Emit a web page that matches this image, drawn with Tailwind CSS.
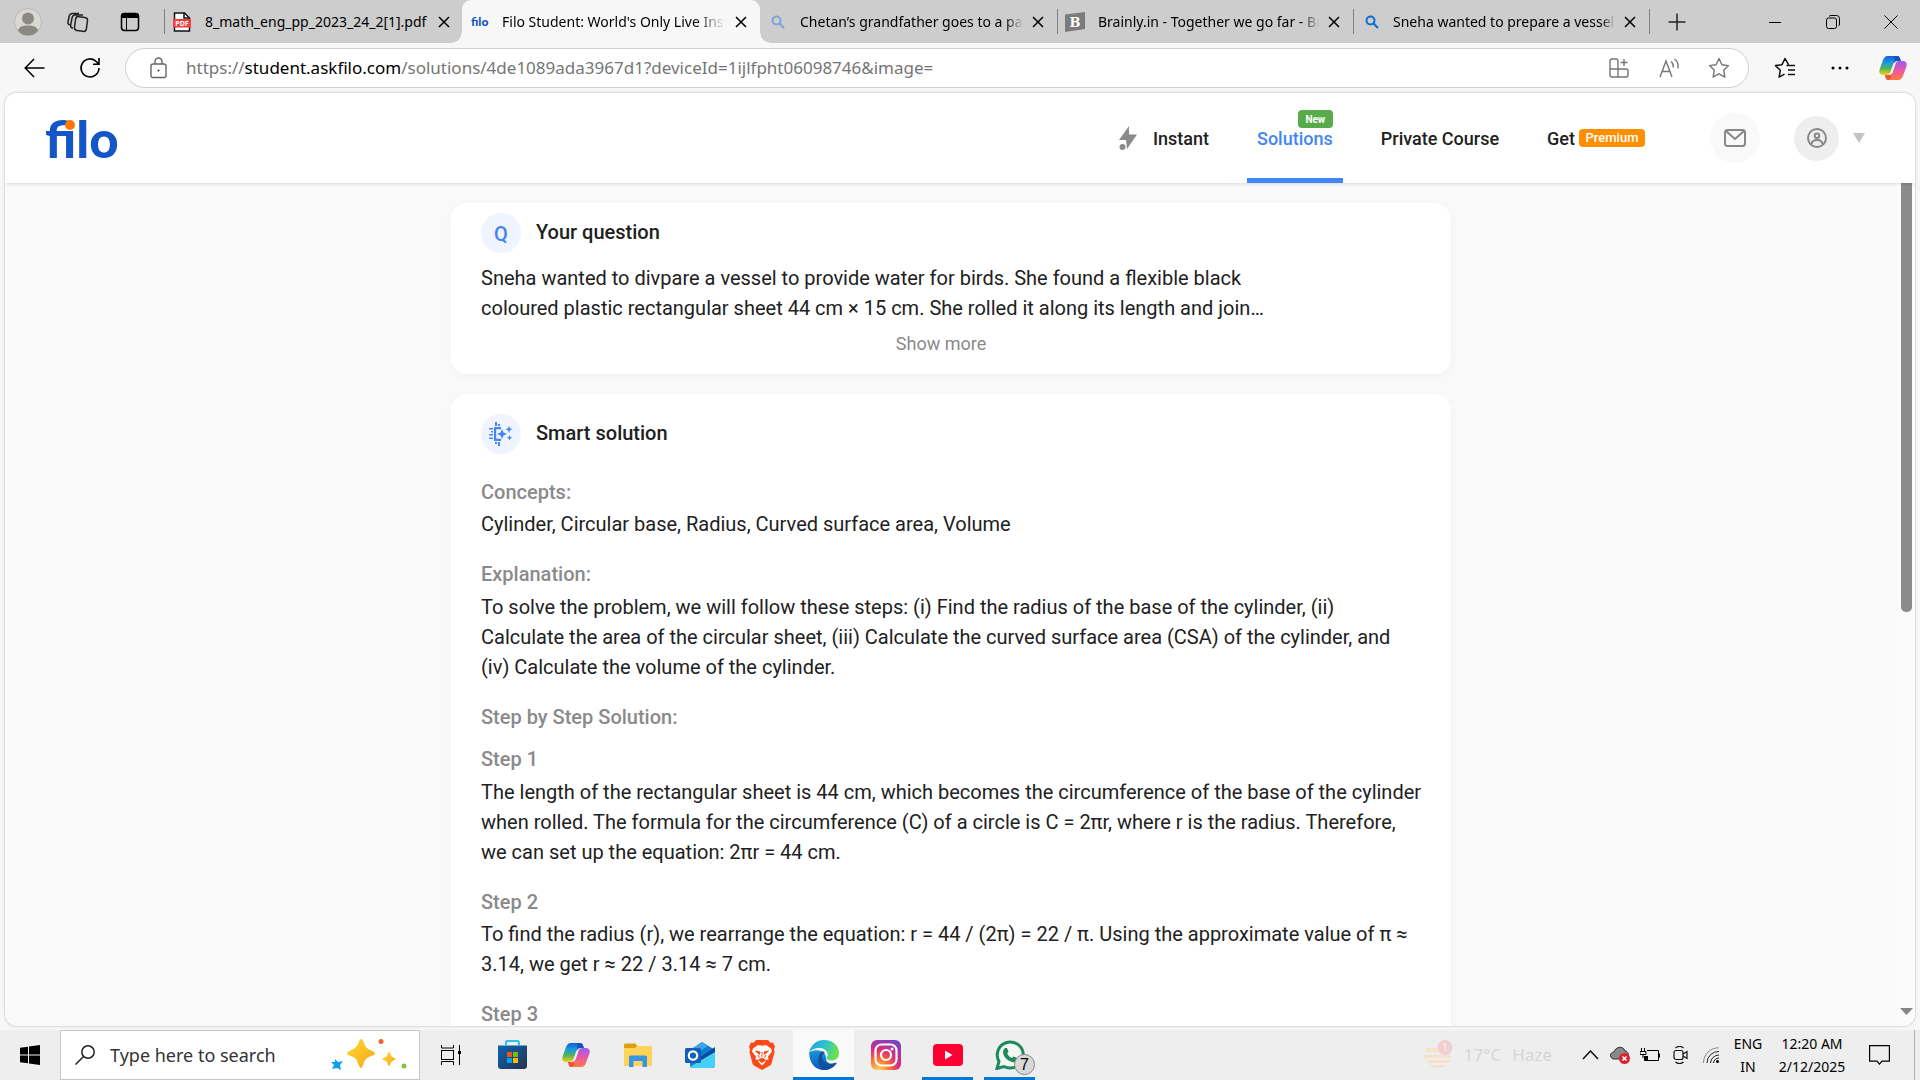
<!DOCTYPE html>
<html lang="en">
<head>
<meta charset="utf-8">
<meta name="viewport" content="width=device-width, initial-scale=1">
<title>Filo Student: World's Only Live Instant Tutoring Platform</title>
<script src="https://cdn.jsdelivr.net/npm/@tailwindcss/browser@4"></script>
</head>
<body class="flex h-screen flex-col overflow-hidden bg-[#f7f7f7] font-['Noto_Sans',sans-serif] text-black">

<svg class="absolute h-0 w-0" aria-hidden="true">
  <defs>
    <linearGradient id="cpA" x1="0" y1="0" x2="0" y2="1"><stop offset="0" stop-color="#0a63d8"/><stop offset=".35" stop-color="#1b9be0"/><stop offset=".65" stop-color="#4fb55a"/><stop offset="1" stop-color="#f7cf1b"/></linearGradient>
    <linearGradient id="cpB" x1="0" y1="0" x2="0" y2="1"><stop offset="0" stop-color="#a05af0"/><stop offset=".5" stop-color="#e858a8"/><stop offset="1" stop-color="#ff7b3d"/></linearGradient>
    <linearGradient id="edA" x1="0" y1="0" x2="1" y2=".3"><stop offset="0" stop-color="#1b9de2"/><stop offset=".55" stop-color="#2cc3d0"/><stop offset="1" stop-color="#6be04e"/></linearGradient>
    <linearGradient id="edB" x1="0" y1="0" x2="0" y2="1"><stop offset="0" stop-color="#1a94dc"/><stop offset="1" stop-color="#0b5bb5"/></linearGradient>
    <linearGradient id="star" x1="0" y1="0" x2="1" y2="1"><stop offset="0" stop-color="#ffd92e"/><stop offset="1" stop-color="#f6a81c"/></linearGradient>
    <linearGradient id="store" x1="0" y1="0" x2="1" y2="1"><stop offset="0" stop-color="#0b66b4"/><stop offset="1" stop-color="#26324f"/></linearGradient>
    <radialGradient id="insta" cx=".25" cy="1" r="1.15"><stop offset="0" stop-color="#ffd667"/><stop offset=".3" stop-color="#fb7a2e"/><stop offset=".6" stop-color="#d82d7e"/><stop offset="1" stop-color="#6a45d0"/></radialGradient>
    <symbol id="copilot" viewBox="0 0 28 28">
      <path d="M18 2H9C6 2 4.500 4 3.500 7.500L.6 15.500c-1 3.500.4 5.500 3.400 5.500h3.500c2.500 0 3.500-1.500 4.300-4L15 8c.8-2.500 2-3.500 4-3.500h2C20.500 3 19.500 2 18 2z" fill="url(#cpA)"/>
      <path d="M15.500 2H18c2.500 0 3.300 2 4 5h-3.500c-2 0-3 1-3.700 3z" fill="#1554b8"/>
      <path d="M10 26h9c3 0 4.500-2 5.500-5.500l2.900-8c1-3.500-.4-5.500-3.400-5.500h-3.500c-2.500 0-3.500 1.500-4.300 4L13 20c-.8 2.500-2 3.500-4 3.500H7C7.500 25 8.500 26 10 26z" fill="url(#cpB)"/>
      <path d="M6 21h4c2 0 2.800-1 3.400-2.500L12 23c-.6 2-1.300 3-2.800 3C7 26 6.500 24 6 21z" fill="#e8533a"/>
    </symbol>
    <symbol id="close" viewBox="0 0 12 12"><path d="M1 1l10 10M11 1L1 11" fill="none" stroke="currentColor" stroke-width="1.500"/></symbol>
    <symbol id="lens" viewBox="0 0 14 14"><circle cx="5.500" cy="5.500" r="4" fill="none" stroke="currentColor" stroke-width="2"/><path d="M8.500 8.500l4.500 4.500" stroke="currentColor" stroke-width="2.200"/></symbol>
  </defs>
</svg>

<!-- Tab strip -->
<header class="flex h-[43px] shrink-0 items-stretch bg-[#cdcdcd] text-[15px]">
  <div class="flex w-[165px] shrink-0 items-center gap-6 pl-[14px]">
    <button aria-label="Profile" class="h-[28px] w-[28px]"><svg viewBox="0 0 28 28"><circle cx="14" cy="14" r="13.500" fill="#dad8d4" stroke="#b8b8b8"/><circle cx="14" cy="10.500" r="6" fill="#8c8884"/><path d="M4 23c1-5 5-5.500 10-5.500S23 18 24 23c-3 3-6 4.500-10 4.500S7 26 4 23z" fill="#8c8884"/></svg></button>
    <button aria-label="Workspaces" class="h-[24px] w-[24px]"><svg viewBox="0 0 24 24" fill="none" stroke="#222" stroke-width="1.500"><rect x="9" y="7" width="12" height="14" rx="3" transform="rotate(8 15 14)"/><path d="M7 18c-2 0-2.500-1-2.300-3L6 8c.4-2 1.300-3 3-3h8M4 15c-2-.5-2.300-1.500-2-3l1-5c.4-2.500 1.500-3.500 3.500-3.500H13"/></svg></button>
    <button aria-label="Tab actions" class="ml-[6px] h-[20px] w-[20px]"><svg viewBox="0 0 20 20"><rect x="1.500" y="1.500" width="17" height="17" rx="3" fill="none" stroke="#000" stroke-width="1.500"/><path d="M1 6V4a3 3 0 013-3h12a3 3 0 013 3v2z"/><path d="M6.500 6v12" stroke="#000"/></svg></button>
    <span class="ml-auto h-[25px] w-px bg-[#808080]"></span>
  </div>

  <div class="flex w-[297px] shrink items-center pl-[8px] pr-[12px]">
    <svg class="h-[20px] w-[18px] shrink-0" viewBox="0 0 18 20"><path d="M1.500 1h10l5 5v13h-15z" fill="#fff" stroke="#111" stroke-width="1.500"/><path d="M11 1v5h5" fill="none" stroke="#111" stroke-width="1.500"/><rect y="7" width="18" height="8.500" rx="1" fill="#f03e3e"/><text x="9" y="14" text-anchor="middle" font-size="7" font-weight="bold" fill="#fff" font-family="Noto Sans">PDF</text></svg>
    <span class="ml-[14px] grow overflow-hidden text-[14px] whitespace-nowrap">8_math_eng_pp_2023_24_2[1].pdf</span>
    <button aria-label="Close tab" class="ml-[9px] h-[12px] w-[12px] shrink-0"><svg class="h-[12px] w-[12px]"><use href="#close"/></svg></button>
  </div>
  <div class="relative flex w-[298px] shrink items-center rounded-t-[9px] bg-[#f7f7f7] pl-[9px] pr-[13px]">
    <span class="absolute bottom-0 -left-[10px] h-[10px] w-[10px] bg-[radial-gradient(circle_at_0_0,transparent_9px,#f7f7f7_10px)]"></span>
    <span class="absolute -right-[10px] bottom-0 h-[10px] w-[10px] bg-[radial-gradient(circle_at_100%_0,transparent_9px,#f7f7f7_10px)]"></span>
    <span class="w-[19px] shrink-0 font-['Lato',sans-serif] text-[12px] font-black text-[#1455c8]">filo</span>
    <span class="ml-[12px] grow overflow-hidden text-[14px] whitespace-nowrap [mask-image:linear-gradient(to_right,#000_86%,transparent)]">Filo Student: World's Only Live Instant</span>
    <button aria-label="Close tab" class="ml-[9px] h-[12px] w-[12px] shrink-0"><svg class="h-[12px] w-[12px]"><use href="#close"/></svg></button>
  </div>
  <div class="flex w-[297px] shrink items-center pl-[11px] pr-[13px]">
    <svg class="h-[14px] w-[14px] shrink-0 text-[#78a8d8]"><use href="#lens"/></svg>
    <span class="ml-[15px] grow overflow-hidden text-[14px] whitespace-nowrap [mask-image:linear-gradient(to_right,#000_92%,transparent)]">Chetan’s grandfather goes to a park</span>
    <button aria-label="Close tab" class="ml-[9px] h-[12px] w-[12px] shrink-0"><svg class="h-[12px] w-[12px]"><use href="#close"/></svg></button>
  </div>
  <span class="h-[25px] w-px shrink-0 self-center bg-[#808080]"></span>
  <div class="flex w-[295px] shrink items-center pl-[7px] pr-[13px]">
    <svg class="h-[20px] w-[20px] shrink-0" viewBox="0 0 20 20"><path d="M0 2.500L20 0v17L0 20z" fill="#7b7b7b"/><text x="10" y="15" text-anchor="middle" font-size="13" font-weight="bold" fill="#fff" font-family="DejaVu Serif">B</text></svg>
    <span class="ml-[13px] grow overflow-hidden text-[14px] whitespace-nowrap [mask-image:linear-gradient(to_right,#000_92%,transparent)]">Brainly.in - Together we go far - Brainly</span>
    <button aria-label="Close tab" class="ml-[9px] h-[12px] w-[12px] shrink-0"><svg class="h-[12px] w-[12px]"><use href="#close"/></svg></button>
  </div>
  <span class="h-[25px] w-px shrink-0 self-center bg-[#808080]"></span>
  <div class="flex w-[295px] shrink items-center pl-[11px] pr-[13px]">
    <svg class="h-[14px] w-[14px] shrink-0 text-[#0f6fd0]"><use href="#lens"/></svg>
    <span class="ml-[14px] grow overflow-hidden text-[14px] whitespace-nowrap [mask-image:linear-gradient(to_right,#000_94%,transparent)]">Sneha wanted to prepare a vessel to</span>
    <button aria-label="Close tab" class="ml-[9px] h-[12px] w-[12px] shrink-0"><svg class="h-[12px] w-[12px]"><use href="#close"/></svg></button>
  </div>
  <span class="h-[25px] w-px shrink-0 self-center bg-[#808080]"></span>
  <button aria-label="New tab" class="ml-[18px] w-[18px] shrink-0"><svg viewBox="0 0 18 18" stroke="#222" stroke-width="1.500"><path d="M9 .5v17M.5 9h17"/></svg></button>
  <div class="ml-auto flex items-center gap-[44px] pr-[22px]">
    <button aria-label="Minimize" class="h-[14px] w-[14px]"><svg viewBox="0 0 14 14" stroke="#000"><path d="M1 7.500h12"/></svg></button>
    <button aria-label="Restore" class="h-[14px] w-[14px]"><svg viewBox="0 0 14 14" fill="none" stroke="#000"><rect x=".5" y="3" width="10" height="10.500" rx="2"/><path d="M3 1.500C3.500.8 4 .5 5 .5h5.500a3 3 0 013 3V9c0 1-.3 1.500-1 2"/></svg></button>
    <button aria-label="Close" class="h-[14px] w-[14px]"><svg viewBox="0 0 14 14" stroke="#000"><path d="M.5.500l13 13M13.500.500l-13 13"/></svg></button>
  </div>
</header>

<!-- Address bar -->
<div class="flex h-[50px] shrink-0 items-center pr-[13px] pl-[24px]">
  <button aria-label="Back" class="h-[20px] w-[21px]"><svg viewBox="0 0 21 20" fill="none" stroke="#000" stroke-width="1.500"><path d="M20.500 10H1.500M10 1L1.200 10l8.800 9"/></svg></button>
  <button aria-label="Reload" class="ml-[34px] h-[22px] w-[22px]"><svg viewBox="0 0 22 22" fill="none" stroke="#000" stroke-width="1.600"><path d="M20 11a9 9 0 11-2.500-6.300L19.500 7M20 1v6.200h-6"/></svg></button>
  <div class="ml-[24px] flex h-[40px] grow items-center rounded-full border border-[#cfcfcf] bg-white pr-[18px] pl-[24px] text-[#757575]">
    <svg class="h-[22px] w-[17px] shrink-0" viewBox="0 0 17 22" fill="none" stroke="#666" stroke-width="1.400"><rect x="1" y="7" width="15" height="13.500" rx="2"/><path d="M5 7V4.500a3.500 3.500 0 017 0V7"/><circle cx="8.500" cy="13.500" r="1" fill="#333" stroke="none"/></svg>
    <div role="textbox" aria-label="Address" contenteditable="true" class="ml-[19px] grow text-[17px] leading-6 whitespace-nowrap">https://<span class="text-black">student.askfilo.com</span>/solutions/4de1089ada3967d1?deviceId=1ijlfpht06098746&amp;image=</div>
    <button aria-label="App available" class="h-[20px] w-[20px]"><svg viewBox="0 0 20 20" fill="none" stroke="#757575" stroke-width="1.400"><path d="M9 19V3a2 2 0 00-2-2H3a2 2 0 00-2 2v14a2 2 0 002 2h14a2 2 0 002-2v-4a2 2 0 00-2-2H1M15 1v7M11.500 4.500h7"/></svg></button>
    <button aria-label="Read aloud" class="ml-[30px] h-[20px] w-[21px]"><svg viewBox="0 0 21 20" fill="none" stroke="#757575" stroke-width="1.400"><path d="M1 19L7 3l6 16M3 13.500h8M12 3.500c2 1.500 2.500 3.500 2.300 6M15.500 1c3 2 4 5.500 3.500 9.500"/></svg></button>
    <button aria-label="Add to favorites" class="ml-[28px] h-[22px] w-[22px]"><svg viewBox="0 0 22 22" fill="none" stroke="#757575" stroke-width="1.400" stroke-linejoin="round"><path d="M11 1.500l2.900 6.200 6.600.9-4.800 4.700 1.200 6.800-5.900-3.300-5.900 3.300 1.200-6.800L1.500 8.600l6.600-.9z"/></svg></button>
  </div>
  <button aria-label="Favorites" class="ml-[25px] h-[22px] w-[22px]"><svg viewBox="0 0 22 22" fill="none" stroke="#111" stroke-width="1.500" stroke-linejoin="round"><path d="M14.500 7.700L11 1.500 8 7.700l-6.500.9 4.800 4.700-1.200 6.800 5.400-3M12.500 8.500H21M14 13H21M14 17.500h7"/></svg></button>
  <button aria-label="Settings and more" class="ml-[35px] h-[18px] w-[18px]"><svg viewBox="0 0 18 18"><circle cx="2" cy="9" r="1.500"/><circle cx="9" cy="9" r="1.500"/><circle cx="16" cy="9" r="1.500"/></svg></button>
  <button aria-label="Copilot" class="ml-[30px] h-[28px] w-[28px]"><svg class="h-[28px] w-[28px]"><use href="#copilot"/></svg></button>
</div>

<!-- Web page -->
<main class="mx-[5px] mb-[4px] flex min-h-0 grow flex-col overflow-hidden rounded-[12px] bg-[#f9f9f9] font-['Roboto',sans-serif] text-[#212121] shadow-[0_0_2px_1px_#d8d8d8]">
  <nav class="z-10 flex h-[90px] shrink-0 items-stretch bg-white pr-[50px] pl-[40px] text-[18px] font-medium shadow-[0_1px_3px_#00000020]">
    <a href="#" aria-label="Filo home" class="relative flex items-center font-['Lato',sans-serif] text-[51px] leading-none font-black text-[#1455c8]">filo<span class="absolute top-[27px] left-[20px] h-[10px] w-[10px] rounded-full bg-[#ff7600]"></span></a>
    <div class="ml-auto flex items-stretch">
      <a href="#" class="flex items-center"><svg class="mr-[16px] h-[25px] w-[18px]" viewBox="0 0 18 25" fill="#8a8a8a"><path d="M10 0L0 14h8l-1 0 1 9L18 8.500h-8z"/><circle cx="3.500" cy="21" r="3"/></svg>Instant</a>
      <a href="#" class="relative ml-[38px] flex items-center px-[10px] text-[#4285f4] shadow-[inset_0_-5px_#4285f4]">Solutions<span class="absolute top-[17px] right-[10px] flex h-[18px] w-[35px] items-center justify-center rounded-[4px] bg-[#58ab48] text-[10px] font-bold text-white">New</span></a>
      <a href="#" class="ml-[38px] flex items-center">Private Course</a>
      <a href="#" class="ml-[48px] flex items-center">Get<span class="ml-[4px] flex h-[18px] w-[66px] items-center justify-center rounded-[4px] bg-[#ff8f00] text-[13px] text-white">Premium</span></a>
    </div>
    <button aria-label="Messages" class="ml-[65px] flex h-[50px] w-[50px] items-center justify-center self-center rounded-full bg-[#f9f9f9]"><svg class="h-[18px] w-[22px]" viewBox="0 0 22 18" fill="none" stroke="#888" stroke-width="2" stroke-linejoin="round"><rect x="1" y="1" width="20" height="16" rx="2.500"/><path d="M2 2l9 8 9-8"/></svg></button>
    <button aria-label="Account" class="ml-[34px] flex items-center gap-[14px]"><span class="flex h-[45px] w-[45px] items-center justify-center rounded-full bg-[#eee]"><svg class="h-[20px] w-[20px]" viewBox="0 0 20 20" fill="none" stroke="#888" stroke-width="2"><circle cx="10" cy="10" r="9"/><circle cx="10" cy="7.800" r="2.300"/><path d="M4.500 16c.5-3 2.500-4 5.500-4s5 1 5.500 4"/></svg></span>
      <svg class="h-[10px] w-[12px]" viewBox="0 0 12 10"><path d="M0 0h12L6 10z" fill="#c4c4c4"/></svg></button>
  </nav>

  <div class="flex min-h-0 grow">
    <div class="min-w-0 grow overflow-hidden pt-[20px] text-[20px] leading-[30px]">
      <section class="mx-auto w-full max-w-[1000px] rounded-[16px] bg-white px-[30px] pt-[10px] pb-[15px] shadow-[0_2px_8px_#00000008]">
        <div class="flex items-center gap-[15px]"><span class="flex h-[40px] w-[40px] items-center justify-center rounded-full bg-[#eff4fe] pt-[2px] font-medium text-[#4285f4]">Q</span><h2 class="pb-[2px] font-medium">Your question</h2></div>
        <p class="mt-[10px] max-w-[800px]">Sneha wanted to divpare a vessel to provide water for birds. She found a flexible black<br>coloured plastic rectangular sheet 44 cm × 15 cm. She rolled it along its length and join…</p>
        <button class="mt-[6px] block w-[920px] max-w-full text-center text-[18px] text-[#8a8a8a]">Show more</button>
      </section>

      <section class="mx-auto mt-[20px] w-full max-w-[1000px] rounded-[16px] bg-white pt-[20px] pr-[26px] pb-[30px] pl-[30px] shadow-[0_2px_8px_#00000008]">
        <div class="mb-[23px] flex items-center gap-[15px]"><span class="flex h-[40px] w-[40px] items-center justify-center rounded-full bg-[#eff4fe]"><svg class="h-[24px] w-[24px]" viewBox="0 0 24 24" fill="#4285f4"><path d="M5 5h7v2.200H7.200v9.600H12V19H5zM6 0h2v4H6zM9 2h2v2H9zM6 20h2v2H6zM9 20h2v4H9zM0 6h4v1.600H0zM2 9h2v1.600H2zM0 12h4v1.600H0zM0 15.500h4v1.600H0zM13 7l1.500 3.500L18 12l-3.500 1.500L13 17l-1.500-3.500L8 12l3.500-1.500zM20 4l1 2.300 2.500 1-2.500 1L20 11l-1-2.700-2.500-1 2.500-1zM20.500 13l.9 2 2 .8-2 .8-.9 2-.9-2-2-.8 2-.8z"/></svg></span><h2 class="pb-[2px] font-medium">Smart solution</h2></div>
        <h3 class="mb-[2px] font-medium text-[#8a8a8a]">Concepts:</h3>
        <p class="mb-[20px]">Cylinder, Circular base, Radius, Curved surface area, Volume</p>
        <h3 class="mb-[3px] font-medium text-[#8a8a8a]">Explanation:</h3>
        <p class="mb-[20px]">To solve the problem, we will follow these steps: (i) Find the radius of the base of the cylinder, (ii)<br>Calculate the area of the circular sheet, (iii) Calculate the curved surface area (CSA) of the cylinder, and<br>(iv) Calculate the volume of the cylinder.</p>
        <h3 class="mb-[12px] font-medium text-[#8a8a8a]">Step by Step Solution:</h3>
        <h3 class="mb-[3px] font-medium text-[#8a8a8a]">Step 1</h3>
        <p class="mb-[20px]">The length of the rectangular sheet is 44 cm, which becomes the circumference of the base of the cylinder when rolled. The formula for the circumference (C) of a circle is C = 2πr, where r is the radius. Therefore, we can set up the equation: 2πr = 44 cm.</p>
        <h3 class="mb-[2px] font-medium text-[#8a8a8a]">Step 2</h3>
        <p class="mb-[20px]">To find the radius (r), we rearrange the equation: r = 44 / (2π) = 22 / π. Using the approximate value of π ≈ 3.14, we get r ≈ 22 / 3.14 ≈ 7 cm.</p>
        <h3 class="font-medium text-[#8a8a8a]">Step 3</h3>
      </section>
    </div>
    <div class="flex w-[18px] shrink-0 flex-col items-center justify-between bg-[#fbfbfb] pb-[11px]">
      <span class="h-[429px] w-[11px] rounded-b-[5px] bg-[#8b8b8b]"></span>
      <svg class="h-[7px] w-[13px]" viewBox="0 0 13 7"><path d="M0 0h13L6.500 7z" fill="#858585"/></svg>
    </div>
  </div>
</main>

<!-- Taskbar -->
<footer class="flex h-[50px] shrink-0 items-stretch bg-[#eee]">
  <button aria-label="Start" class="flex w-[60px] items-center justify-center"><svg class="h-[20px] w-[20px]" viewBox="0 0 20 20"><path d="M0 2.800L8 1.700v7.800H0zM9 1.500L20 0v9.500H9zM0 10.500h8v7.800L0 17.200zM9 10.500h11V20L9 18.500z"/></svg></button>
  <label class="flex w-[360px] items-center border border-[#c6c6c6] bg-white pr-[10px] pl-[14px]">
    <svg class="h-[20px] w-[20px] shrink-0" viewBox="0 0 20 20" fill="none" stroke="#222" stroke-width="1.500"><circle cx="13" cy="7" r="6.200"/><path d="M8.500 11.500L.5 19.500"/></svg>
    <input type="text" aria-label="Search" placeholder="Type here to search" class="ml-[15px] min-w-0 grow bg-transparent text-[18px] outline-none placeholder:text-[#333]">
    <svg class="h-[34px] w-[80px] shrink-0" viewBox="0 0 80 34"><path d="M32 1c2 0 3 5 5 8s9 4 9 6.500-6 2.500-9 5.500-3 9-5 9-3-6-5-9-9-3-9-5.500 6-3.500 9-6.500 3-8 5-8z" fill="url(#star)"/><path d="M60 14c1 0 1.500 3 2.500 4.300s4 1.500 4 2.700-3 1.500-4 2.800S61 28 60 28s-1.300-3-2.300-4.200-4.200-1.600-4.200-2.800 3.200-1.500 4.200-2.700S59 14 60 14z" fill="url(#star)"/><path d="M6 21l3 3 5-1-3 4 1 5-4-2-5 1 2-4-3-3 4 0z" fill="#0aa4ee"/><circle cx="52" cy="3.500" r="2.500" fill="#f4632c"/><circle cx="75" cy="28" r="2.500" fill="#86c440"/></svg>
  </label>
  <button aria-label="Task view" class="flex w-[61px] items-center justify-center"><svg class="h-[20px] w-[20px]" viewBox="0 0 20 20" fill="none" stroke="#000"><rect x=".5" y="5.500" width="12" height="9"/><path d="M.5 0v3h12V0M.5 20v-3.500h12V20M18.500 0v20"/><path d="M17 6h3v3h-3z" fill="#000" stroke="none"/></svg></button>
  <button aria-label="Microsoft Store" class="flex w-[63px] items-center justify-center"><svg class="h-[30px] w-[29px]" viewBox="0 0 29 30"><path d="M0 5.500h29V26a3 3 0 01-3 3H3a3 3 0 01-3-3z" fill="url(#store)"/><path d="M8 6V2.500a1.500 1.500 0 011.500-1.500h10A1.500 1.500 0 0121 2.500V6" fill="none" stroke="#2fc0f0" stroke-width="2"/><path d="M9 12h5v5H9z" fill="#f25022"/><path d="M15 12h5v5h-5z" fill="#7fba00"/><path d="M9 18h5v5H9z" fill="#00a4ef"/><path d="M15 18h5v5h-5z" fill="#ffb900"/></svg></button>
  <button aria-label="Copilot" class="flex w-[63px] items-center justify-center"><svg class="h-[28px] w-[28px]"><use href="#copilot"/></svg></button>
  <button aria-label="File Explorer" class="flex w-[62px] items-center justify-center"><svg class="h-[24px] w-[28px]" viewBox="0 0 28 24"><path d="M0 2a1 1 0 011-1h11l1.500 2H27a1 1 0 011 1v18a1 1 0 01-1 1H1a1 1 0 01-1-1z" fill="#fdd35a"/><path d="M0 2a1.500 1.500 0 011.500-1.500h10L13 3l-2 2H0z" fill="#dca011"/><path d="M5 24V14a1.500 1.500 0 011.500-1.500h15A1.500 1.500 0 0123 14v10h-4.500v-6h-9v6z" fill="#3b94e0"/></svg></button>
  <button aria-label="Outlook" class="flex w-[62px] items-center justify-center"><svg class="h-[28px] w-[30px]" viewBox="0 0 30 28"><path d="M5 9L17 1l13 8v15a3 3 0 01-3 3H8a3 3 0 01-3-3z" fill="#0f7bd2"/><path d="M5 9L17 1l6 4-13 8z" fill="#3aa6e8"/><path d="M14 17l16-11v6L16 22z" fill="#0a4a9c"/><path d="M30 11v13a3 3 0 01-3 3H8a3 3 0 01-2.500-1.500z" fill="#45d0f8"/><rect y="7" width="16" height="15" rx="1.500" fill="#0f5fbd"/><circle cx="8" cy="14.500" r="4.200" fill="none" stroke="#fff" stroke-width="2.200"/></svg></button>
  <button aria-label="Brave" class="flex w-[62px] items-center justify-center"><svg class="h-[30px] w-[26px]" viewBox="0 0 26 30"><path d="M7 0h12l2.500 2.800 2.500-.3 2 4-1 3 .6 2.500-3 11c-.4 1.500-1 2-2 2.800L13 30l-7.600-4.200c-1-.8-1.600-1.300-2-2.800L.4 12 1 9.500l-1-3 2-4 2.500.3z" fill="#fb4a18"/><path d="M9 5l4 .8L17 5l5 3.500 1 3-4 5 .5 3-2.500.5-1 2.500-3 3-3-3-1-2.500-2.500-.5.500-3-4-5 1-3z" fill="#fff"/><path d="M6.500 11l4.500 1-.5 2.500zM19.500 11L15 12l.5 2.500zM13 12v5M9.500 20l3.500-2 3.500 2-3.500 2.500zM9 15l1.500 3M17 15l-1.500 3" fill="#fb4a18" stroke="#fb4a18"/></svg></button>
  <button aria-label="Microsoft Edge" class="flex w-[61px] items-center justify-center bg-[#f9f9f9] shadow-[inset_0_-3px_#0078d7]"><svg class="h-[30px] w-[30px]" viewBox="0 0 30 30"><path d="M.2 12C0 20 4 30 15 30c6 0 10-3 12-7-5 2-10 0-10-5 0-7-8-10-16.800-6z" fill="url(#edB)"/><path d="M.3 12C2 4.500 8 0 15 0c9 0 15 6 15 13 0 5-3.500 7.500-7.500 7.500-3 0-5-1.200-5-2.300 0-1 1.200-1.400 1.200-3.700C18.700 11.500 15.500 8 10.500 8 5.500 8 2 10 .3 12z" fill="url(#edA)"/><path d="M12.500 12c-4 3-5.500 14 2.500 18 6 0 10-3 12.500-6.500.4-.7-.2-1.200-.9-.8C22 25 14 24 13 17.500c-.3-2.500 1-4.500 3-5.300-1-.8-2.500-.8-3.500-.2z" fill="#124f9c"/></svg></button>
  <button aria-label="Instagram" class="flex w-[63px] items-center justify-center"><svg class="h-[30px] w-[30px]" viewBox="0 0 30 30"><rect width="30" height="30" rx="6" fill="url(#insta)"/><g fill="none" stroke="#fff" stroke-width="2.200"><rect x="4.500" y="4.500" width="21" height="21" rx="6"/><circle cx="15" cy="15" r="5"/></g><circle cx="21" cy="9" r="1.500" fill="#fff"/></svg></button>
  <button aria-label="YouTube" class="ml-[5px] flex w-[51px] items-center justify-center shadow-[inset_0_-3px_#0078d7]"><svg class="h-[22px] w-[30px]" viewBox="0 0 30 22"><rect width="30" height="22" rx="4" fill="#ff0033"/><path d="M12 6.500l7.500 4.500-7.500 4.500z" fill="#fff"/></svg></button>
  <button aria-label="WhatsApp, 7 unread" class="relative ml-[11px] flex w-[51px] items-center justify-center shadow-[inset_0_-3px_#0078d7]"><svg class="h-[30px] w-[30px]" viewBox="0 0 30 30"><path d="M2 28.500l2-7A13 13 0 1115 28a13 13 0 01-6-1.500z" fill="#f4f6f4" stroke="#1d8a5a" stroke-width="3"/><path d="M10 8l2 0 1.500 3.500-1.300 2c1 2 2.500 3.500 4.500 4.500l2-1.500 3.300 1.500v2c-1 2-3 2.500-5 2C12 20.500 9 17 8 13c0-2 .5-4 2-5z" fill="#1d8a5a"/></svg><span class="absolute right-0 bottom-[5px] flex h-[21px] w-[21px] items-center justify-center rounded-full border border-[#888] bg-[#d8d8d8] font-['Liberation_Sans',sans-serif] text-[16px]">7</span></button>

  <div class="ml-auto flex items-center">
    <button class="flex items-center text-[17px] whitespace-nowrap text-[#d6d6d6]"><svg class="mr-[11px] h-[30px] w-[30px]" viewBox="0 0 30 30"><path d="M3 8h16v4H3zM1 15h27v3H1zM3 20h24l-2 3H5zM6 25h17c-4 4-13 4-17 0z" fill="#f6e2cc"/><circle cx="22" cy="7.500" r="7.500" fill="#efcfcf"/><text x="22" y="12" text-anchor="middle" font-size="12" fill="#f6eeee" font-family="Noto Sans">1</text></svg>17°C<span class="ml-[11px]">Haze</span></button>
    <button aria-label="Show hidden icons" class="ml-[30px] h-[10px] w-[17px]"><svg viewBox="0 0 17 10" fill="none" stroke="#111" stroke-width="1.500"><path d="M1 9l7.500-8L16 9"/></svg></button>
    <button aria-label="OneDrive" class="ml-[11px] h-[18px] w-[20px]"><svg viewBox="0 0 20 18"><path d="M3 13C-1 11 0 6 4 6c1-5 9-7 11-1 3 0 4 4 3 6l-5 2z" fill="#888" stroke="#333"/><circle cx="14.500" cy="12.500" r="5.500" fill="#d9232e"/><path d="M12.500 10.500l4 4M16.500 10.500l-4 4" stroke="#fff" stroke-width="1.500"/></svg></button>
    <button aria-label="Battery" class="ml-[10px] h-[14px] w-[20px]"><svg viewBox="0 0 20 14" fill="none" stroke="#000"><path d="M7 2.500h11.500v10H4.500V8M19.500 5.500v4M1.500 0v3M4.500 0v3M0 3.500h6v3H0zM3 6.500V10"/><path d="M5 8h3v4H5z" fill="#000" stroke="none"/></svg></button>
    <button aria-label="Meet now" class="ml-[13px] h-[18px] w-[15px]"><svg viewBox="0 0 15 18" fill="none" stroke="#111" stroke-width="1.200"><rect x="1" y="4.500" width="9" height="9" rx="2"/><path d="M10 8l4-2.500v7L10 10M2.500 2c2.500-2 5.500-2 8 0M2.500 16c2.500 2 5.500 2 8 0"/></svg></button>
    <button aria-label="Wi-Fi" class="ml-[15px] h-[16px] w-[16px]"><svg viewBox="0 0 16 16" fill="none" stroke="#222"><path d="M.5 16A15 15 0 0116 .8" stroke="#888"/><path d="M4 16A11.500 11.500 0 0116 4.500M7.500 16A8.500 8.500 0 0116 8"/><path d="M10.500 16a5.500 5.500 0 015.500-5"/><circle cx="14.500" cy="14.500" r="1.500" fill="#000" stroke="none"/></svg></button>
    <button class="ml-[9px] w-[40px] text-center text-[14px] leading-[23px]">ENG<br>IN</button>
    <button class="ml-[9px] w-[70px] text-center text-[14px] leading-[23px] whitespace-nowrap">12:20 AM<br>2/12/2025</button>
    <button aria-label="Notifications" class="ml-[22px] h-[20px] w-[21px]"><svg viewBox="0 0 21 20" fill="none" stroke="#000" stroke-width="1.200"><path d="M.6.600h19.800v15.500H13l-2.500 3-2.500-3H.6z"/></svg></button>
    <span class="ml-[24px] h-full w-px bg-[#b4b4b4]"></span><span class="w-[5px]"></span>
  </div>
</footer>
</body>
</html>
